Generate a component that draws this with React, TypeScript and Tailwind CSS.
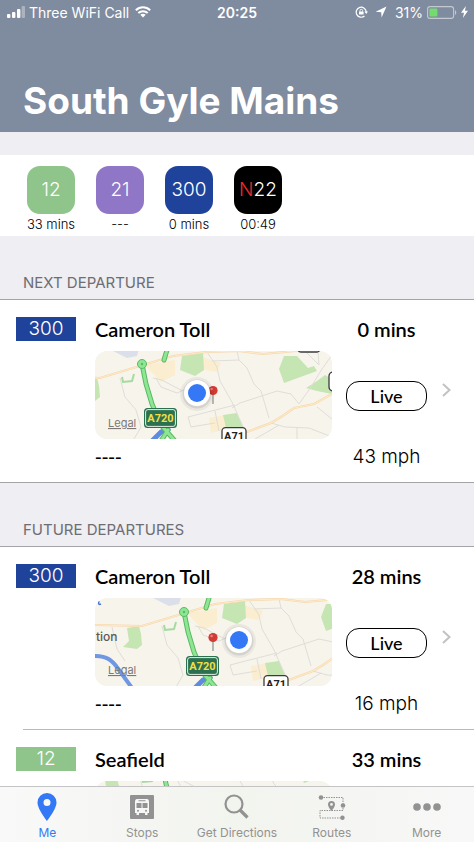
import React from "react";

const tiles = [
  { prefix: "", route: "12", color: "bg-[#8fc48b]", due: "33 mins" },
  { prefix: "", route: "21", color: "bg-[#9076c6]", due: "---" },
  { prefix: "", route: "300", color: "bg-[#1f439b]", due: "0 mins" },
  { prefix: "N", route: "22", color: "bg-black", due: "00:49" },
];

const nextDepartures = [
  {
    route: "300",
    color: "bg-[#1f439b]",
    destination: "Cameron Toll",
    due: "0 mins",
    speed: "43 mph",
    map: { x: 0, y: 0, bus: 102, place: "" },
  },
];

const futureDepartures = [
  {
    route: "300",
    color: "bg-[#1f439b]",
    destination: "Cameron Toll",
    due: "28 mins",
    speed: "16 mph",
    map: { x: 42, y: 1, bus: 144, place: "tion" },
  },
  {
    route: "12",
    color: "bg-[#8fc48b]",
    destination: "Seafield",
    due: "33 mins",
    speed: "",
    map: { x: 20, y: -30, bus: 88, place: "" },
  },
];

type Departure = (typeof futureDepartures)[number];

const StatusBar: React.FC = () => (
  <div className="flex h-6 items-center px-1.5 text-[14px] text-white">
    <div className="flex flex-1 items-center gap-1">
      <svg width="19" height="12" viewBox="0 0 19 12" fill="white">
        <rect x="1" y="8" width="3.4" height="4" rx="1" />
        <rect x="6" y="6" width="3.4" height="6" rx="1" />
        <rect x="11" y="3" width="3.4" height="9" rx="1" />
        <rect x="15.6" y="0" width="3.4" height="12" rx="1" opacity="0.35" />
      </svg>
      <span className="whitespace-nowrap">Three WiFi Call</span>
      <svg className="ml-0.5" width="16" height="12" viewBox="0 0 16 12" fill="none" stroke="white" strokeWidth="2">
        <path d="M0.8 4.2C5 0.2 11 0.2 15.2 4.2" />
        <path d="M3.3 7C6 4.5 10 4.5 12.7 7" />
        <path d="M5.3 8.7C6.9 7.4 9.1 7.4 10.7 8.7L8 11.6Z" fill="white" stroke="none" />
      </svg>
    </div>
    <span className="font-semibold">20:25</span>
    <div className="flex flex-1 items-center justify-end">
      <svg width="14" height="12" viewBox="0 0 14 12" fill="none" stroke="white" strokeWidth="1.2">
        <path d="M9.5 10A5 5 0 1 1 11.2 6" />
        <path d="M9.4 5.6H13L11.2 8Z" fill="white" stroke="none" />
        <rect x="4" y="5.4" width="4.6" height="3.2" rx="0.5" fill="white" stroke="none" />
        <path d="M5 5.6V4.6a1.3 1.3 0 0 1 2.6 0V5.6" strokeWidth="0.9" />
      </svg>
      <svg className="ml-1.5" width="12" height="12" viewBox="0 0 12 12" fill="white">
        <path d="M11.5 0.6L6.6 11.4L6.2 6.2L0.6 5.7Z" />
      </svg>
      <span className="ml-2">31%</span>
      <svg className="ml-1" width="30" height="13" viewBox="0 0 30 13">
        <rect x="0.6" y="0.6" width="26" height="11.8" rx="2.5" fill="none" stroke="#c3c9d3" strokeWidth="1.1" />
        <rect x="2.4" y="2.4" width="8" height="8.2" rx="1" fill="#73dc6c" />
        <path d="M28 4.2c1.7 0.6 1.7 4 0 4.6Z" fill="#c3c9d3" />
      </svg>
      <svg className="ml-1" width="7" height="12" viewBox="0 0 7 12" fill="white">
        <path d="M4.8 0L0 6.8H3L1.9 12L7 4.8H4Z" />
      </svg>
    </div>
  </div>
);

const RouteMap: React.FC<Departure["map"]> = ({ x, y, bus, place }) => (
  <svg
    className="block h-[88px] w-full rounded-xl bg-[#f7f4ec]"
    viewBox="0 0 237 88"
    preserveAspectRatio="xMidYMid slice"
    fontFamily="Inter, sans-serif"
  >
    <g transform={`translate(${x} ${y})`} fill="none">
      <g fill="#fbedcf">
        <path d="M50 14L80 9L80 24L66 31Z" />
        <path d="M104 5L126 12L122 21L110 19Z" />
        <path d="M114 67L130 64L132 78L116 82Z" />
      </g>
      <path d="M14 -2H44L42 5L32 7Z" fill="#dbdfe9" />
      <g fill="#c5e5b3">
        <path d="M87 5L108 2L109 19L100 25L85 19Z" />
        <path d="M-10 29L2 27L4 35L5 46L0 50L-14 48L-8 42Z" />
        <path d="M189 5L202 5L213 17L219 15L222 20L189 32L184 18Z" />
        <path d="M211 37L222 30L230 24L237 28L237 43L222 40Z" />
        <path d="M128 64L142 62L148 76L131 77Z" />
      </g>
      <g stroke="#dfddd8" strokeWidth="1">
        <path d="M25 27L30 46L41 59L46 76L39 88" />
        <path d="M-25 28L-20 50L-12 62" />
        <path d="M61 27L66 36L82 42L91 38M58 27L67 29L78 35L88 40" />
        <path d="M112 1L122 16L125 30L137 51L150 80" />
        <path d="M117 10L144 9L142 0M144 9L152 17L159 33L166 40L174 67" />
        <path d="M93 66L140 54M96 76L120 72M93 66L96 76M120 60L124 80" />
        <path d="M137 57L145 52L182 40L196 43L204 53L216 36L227 18L237 4" />
        <path d="M210 0L224 14L223 0M176 72L190 76L214 77L237 86M222 56L237 68" />
        <path d="M160 88L174 80L184 74M202 77L202 88" />
      </g>
      <g stroke="#f6d5ac" strokeWidth="2.2">
        <path d="M-42 26L5 27L38 17L78 5L112 1L144 0L168 3L190 1L237 -4" />
        <path d="M126 92L149 82L176 72L186 66L199 57L219 53L237 43" />
      </g>
      <g stroke="#fdebc4" strokeWidth="1.2">
        <path d="M-42 26L5 27L38 17L78 5L112 1L144 0L168 3L190 1L237 -4" />
        <path d="M126 92L149 82L176 72L186 66L199 57L219 53L237 43" />
      </g>
      <path d="M27 26L28 31L37 30L39 23" stroke="#a5dba0" strokeWidth="2" />
      <path d="M-44 57C-30 56 -24 62 -18 71L-5 89" stroke="#6f97e2" strokeWidth="4" />
      <path d="M57 90L66 81L75 77" stroke="#5d8be0" strokeWidth="5" />
      <g strokeLinecap="round">
        <path d="M47 13L51 33L57 53L66 74L80 90M72 -1L69 9M66 90L73 79" stroke="#57bb62" strokeWidth="5" />
        <path d="M47 13L51 33L57 53L66 74L80 90M72 -1L69 9M66 90L73 79" stroke="#90e594" strokeWidth="3" />
      </g>
      <circle cx="47" cy="13" r="4.5" fill="#90e594" stroke="#57bb62" />
      <circle cx="47" cy="13" r="1.2" fill="#57bb62" />
      <path d="M-38 2C-39 5 -38 6 -36 5" stroke="#4b73d8" strokeWidth="1.5" />
      <rect x="49" y="57" width="33" height="20" rx="3.5" fill="#2b7150" />
      <rect x="50.6" y="58.6" width="29.8" height="16.8" rx="2.4" fill="none" stroke="#e4efe6" />
      <text x="65.5" y="71" fontSize="11" fontWeight="700" fill="#f3de45" textAnchor="middle" fontFamily="Roboto, sans-serif">
        A720
      </text>
      <rect x="127" y="76.6" width="24" height="19" rx="3.5" fill="white" stroke="#3b3b3b" strokeWidth="1.3" />
      <text x="139" y="89" fontSize="11" fontWeight="700" fill="#222" textAnchor="middle" fontFamily="Roboto, sans-serif">
        A71
      </text>
      <rect x="203" y="-18" width="22" height="19" rx="3" fill="white" stroke="#3b3b3b" strokeWidth="1.3" />
      <rect x="234" y="21" width="24" height="19" rx="4" fill="white" stroke="#3b3b3b" strokeWidth="1.3" />
    </g>
    {place && (
      <text x="1" y="43" fontSize="12" fill="#5c5856" fontWeight="500">
        {place}
      </text>
    )}
    <text x="13" y="76" fontSize="11" fill="#7b7875" textDecoration="underline">
      Legal
    </text>
    <path d="M118 42V53" stroke="#9b9b9b" strokeWidth="1.4" />
    <circle cx="118" cy="39.5" r="4.6" fill="#d23a34" />
    <circle cx="116.6" cy="38" r="1.3" fill="#e9827c" />
    <circle cx={bus} cy="43" r="17" fill="#000" opacity="0.05" />
    <circle cx={bus} cy="43" r="14.5" fill="#000" opacity="0.09" />
    <circle cx={bus} cy="42" r="13" fill="white" />
    <circle cx={bus} cy="42" r="9" fill="#3478f6" />
  </svg>
);

const SectionHeader: React.FC<{ title: string }> = ({ title }) => (
  <h2 className="flex h-16 items-end border-b border-[#a3a3a8] px-[23px] pb-1.5 text-[15px] leading-5 text-[#6d6d72]">
    {title}
  </h2>
);

const DepartureRow: React.FC<{ departure: Departure }> = ({ departure }) => (
  <div className="flex pt-[17px] pr-[23px] pb-[11px] pl-4">
    <div className={`flex h-6 w-[60px] items-center justify-center text-[19px] font-light text-white ${departure.color}`}>
      {departure.route}
    </div>
    <div className="ml-[19px] min-w-0 flex-1">
      <h3 className="h-6 font-[Lato] text-[20px] leading-6 font-semibold">{departure.destination}</h3>
      <div className="mt-2.5">
        <RouteMap {...departure.map} />
      </div>
      <p className="mt-1 font-['Liberation_Sans'] text-[20px] leading-7">----</p>
    </div>
    <div className="ml-3.5 w-[81px] text-center">
      <p className="h-6 font-[Lato] text-[20px] leading-6 font-semibold whitespace-nowrap">{departure.due}</p>
      <button className="mt-10 block h-[30px] w-full rounded-[13px] border border-black font-[Lato] text-[18px] leading-7 font-medium">
        Live
      </button>
      <p className="mt-8 text-[19px] leading-7 font-light whitespace-nowrap">{departure.speed}</p>
    </div>
    <svg className="mt-16 ml-[15px]" width="9" height="18" viewBox="0 0 9 18" fill="none" stroke="#c2c2c6" strokeWidth="2">
      <path d="M1 3L7.5 9L1 15" />
    </svg>
  </div>
);

const tabs = [
  {
    label: "Me",
    icon: (
      <svg width="20" height="28" viewBox="0 0 20 28">
        <path fillRule="evenodd" d="M10 0A9.5 9.5 0 0 0 0.5 9.5C0.5 16 10 28 10 28S19.5 16 19.5 9.5A9.5 9.5 0 0 0 10 0ZM10 6A3.5 3.5 0 1 1 10 13A3.5 3.5 0 1 1 10 6Z" fill="currentColor" />
      </svg>
    ),
  },
  {
    label: "Stops",
    icon: (
      <svg width="24" height="24" viewBox="0 0 24 24">
        <rect width="24" height="24" rx="1" fill="currentColor" />
        <path d="M7 4H17Q19 4 19 7V18H17.5V20H15V18H9V20H6.5V18H5V7Q5 4 7 4Z" fill="#f7f7f5" />
        <path d="M8.5 5.2H15.5V6.2H8.5ZM6.5 8H11.5V13H6.5ZM12.5 8H17.5V13H12.5Z" fill="currentColor" />
        <circle cx="8" cy="15.8" r="1" fill="currentColor" />
        <circle cx="16" cy="15.8" r="1" fill="currentColor" />
      </svg>
    ),
  },
  {
    label: "Get Directions",
    icon: (
      <svg width="25" height="26" viewBox="0 0 25 26" fill="none" stroke="currentColor">
        <circle cx="10" cy="10" r="8.5" strokeWidth="2.2" />
        <path d="M16 16L23.5 23.5" strokeWidth="3.2" />
      </svg>
    ),
  },
  {
    label: "Routes",
    icon: (
      <svg width="28" height="26" viewBox="0 0 28 26" fill="currentColor">
        <path d="M3 3.5H25V16.5H2V24H24" fill="none" stroke="currentColor" strokeWidth="1" strokeDasharray="1.5 1" />
        <circle cx="3" cy="3.5" r="2.3" />
        <circle cx="25" cy="11.5" r="2.3" />
        <circle cx="24.5" cy="23.7" r="2.2" />
        <path fillRule="evenodd" d="M13.5 7A3.5 3.5 0 0 0 10 10.5C10 13 13.500 17 13.5 17S17 13 17 10.5A3.5 3.5 0 0 0 13.5 7ZM13.5 9A1.4 1.4 0 1 1 13.5 11.8A1.4 1.4 0 1 1 13.5 9Z" />
      </svg>
    ),
  },
  {
    label: "More",
    icon: (
      <svg width="28" height="8" viewBox="0 0 28 8" fill="currentColor">
        <circle cx="4" cy="4" r="3.8" />
        <circle cx="14" cy="4" r="3.8" />
        <circle cx="24" cy="4" r="3.8" />
      </svg>
    ),
  },
];

const TabBar: React.FC = () => (
  <nav className="grid h-14 shrink-0 grid-cols-5 border-t border-[#c4c4c6] bg-linear-to-r from-[#f9f9f9] via-[#f2f4ee] to-[#f8f8f8]">
    {tabs.map((tab, idx) => (
      <a
        key={tab.label}
        href="#"
        className={`flex flex-col items-center text-[12px] leading-3 whitespace-nowrap ${
          idx === 0 ? "text-[#3478f6]" : "text-[#929292]"
        }`}
      >
        <span className="flex h-10 items-center">{tab.icon}</span>
        {tab.label}
      </a>
    ))}
  </nav>
);

const App: React.FC = () => {
  return (
    <div className="flex h-screen flex-col bg-[#eeeef3] font-[Inter,sans-serif] text-black">
      <main className="min-h-0 flex-1 overflow-y-auto [scrollbar-width:none]">
        <header className="h-[132px] bg-[#7f8b9f]">
          <StatusBar />
          <h1 className="px-[23px] pt-[53px] text-[37px] leading-12 font-bold text-white">South Gyle Mains</h1>
        </header>

        <div className="mt-[23px] flex gap-[21px] bg-white px-[27px] pt-[11px] pb-0.5">
          {tiles.map((tile) => (
            <div key={tile.prefix + tile.route} className="flex w-12 flex-col items-center">
              <div className={`flex h-12 w-12 items-center justify-center rounded-[13px] text-[19px] font-light text-white ${tile.color}`}>
                {tile.prefix && <span className="text-[#ee2b2b]">{tile.prefix}</span>}
                {tile.route}
              </div>
              <span className="text-[13px] leading-5 font-light whitespace-nowrap">{tile.due}</span>
            </div>
          ))}
        </div>

        <section>
          <SectionHeader title="NEXT DEPARTURE" />
          <div className="border-b border-[#a3a3a8] bg-white">
            {nextDepartures.map((departure) => (
              <DepartureRow key={departure.due} departure={departure} />
            ))}
          </div>
        </section>

        <section>
          <SectionHeader title="FUTURE DEPARTURES" />
          <div className="bg-white">
            {futureDepartures.map((departure, idx) => (
              <div key={departure.due}>
                {idx > 0 && <hr className="ml-[23px] border-[#b9b9bc]" />}
                <DepartureRow departure={departure} />
              </div>
            ))}
          </div>
        </section>
      </main>
      <TabBar />
    </div>
  );
};

export default App;
